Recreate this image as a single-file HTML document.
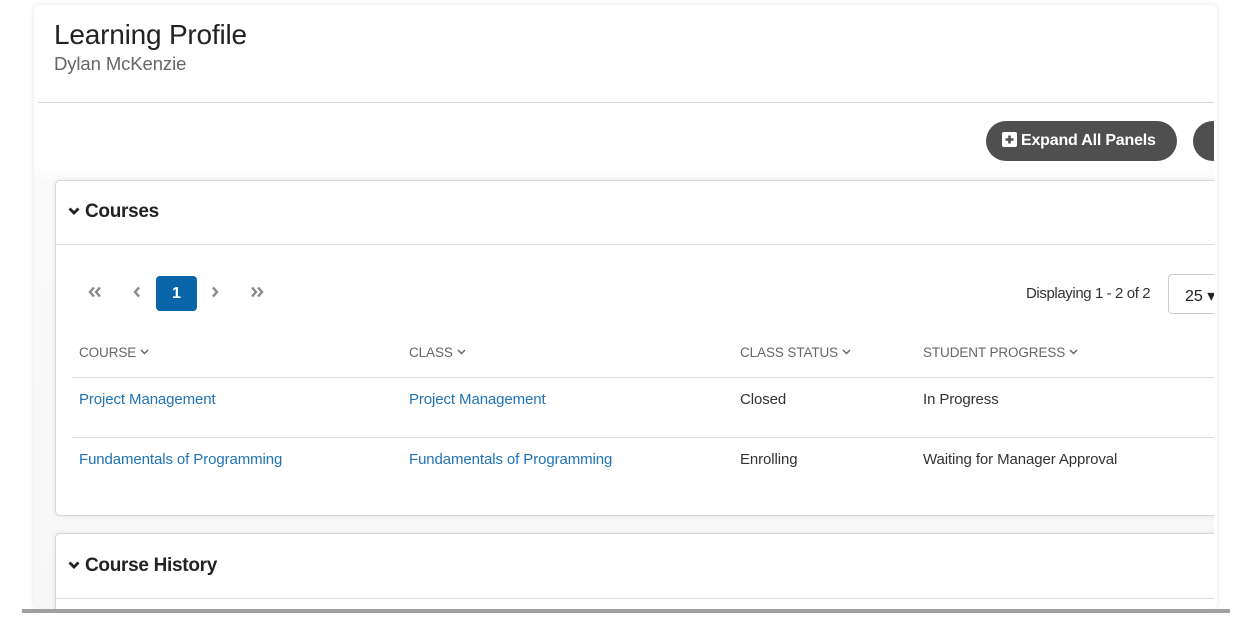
<!DOCTYPE html>
<html><head><meta charset="utf-8"><style>
*{margin:0;padding:0;box-sizing:border-box}
body{width:1251px;height:621px;overflow:hidden;background:#fff;font-family:"Liberation Sans",Arial,sans-serif;position:relative}
.abs{position:absolute}
.card{left:34px;top:5px;width:1183px;height:604px;background:#fff;border-radius:6px;box-shadow:0 0 6px rgba(0,0,0,.12)}
.clip{left:34px;top:0;width:1180px;height:609px;overflow:hidden}
.panel{background:#fff;border:1px solid #d6d6d6;border-radius:5px;box-shadow:0 0 6px rgba(0,0,0,.08)}
.th{font-size:13.5px;color:#666;top:345px;letter-spacing:-.1px}
.td{font-size:15px;color:#333;letter-spacing:-.1px}
.lk{color:#1f73b7}
.sv{display:inline-block;vertical-align:middle;margin-left:4px;position:relative;top:-1px}
.pg{top:286px}
</style></head><body>
<div class="abs card"></div>
<div class="abs clip">
  <div class="abs" style="left:20px;top:19px;font-size:28px;color:#222;letter-spacing:-.2px">Learning Profile</div>
  <div class="abs" style="left:20px;top:53px;font-size:18.5px;color:#666;letter-spacing:-.1px">Dylan McKenzie</div>
  <div class="abs" style="left:4px;top:102px;width:1180px;height:1px;background:#d4d4d4"></div>
  <div class="abs" style="left:0;top:103px;width:1180px;height:518px;background:linear-gradient(#fff,#fff 60px,#fafafa 80px,#f7f7f7)"></div>
  <div class="abs" style="left:952px;top:121px;width:191px;height:40px;border-radius:20px;background:#4f4f4f;color:#fff;font-weight:bold;font-size:16px;line-height:40px;padding-left:16px;letter-spacing:-.2px">
    <span style="display:inline-block;width:15px;height:15px;background:#fff;border-radius:2px;vertical-align:-2px;margin-right:4px;position:relative"><svg width="15" height="15" style="position:absolute;left:0;top:0"><path d="M7.5 3.5v8M3.5 7.5h8" stroke="#4f4f4f" stroke-width="2.6"/></svg></span>Expand All Panels</div>
  <div class="abs" style="left:1159px;top:121px;width:60px;height:40px;border-radius:20px;background:#4f4f4f"></div>
  <div class="abs panel" style="left:21px;top:180px;width:1180px;height:336px">
    <div class="abs" style="left:0;top:63px;width:1180px;height:1px;background:#ddd"></div>
  </div>
  <div class="abs" style="left:34px;top:201px;font-size:19px;font-weight:bold;color:#222;letter-spacing:-.3px"><svg width="12" height="10" style="margin-right:5px;vertical-align:1px"><path d="M1.5 2.5l4.5 4.5 4.5-4.5" stroke="#222" stroke-width="2.8" fill="none"/></svg>Courses</div>
  <svg class="abs pg" style="left:54px" width="14" height="12"><path d="M6 1.5L2 6l4 4.5M12 1.5L8 6l4 4.5" stroke="#888" stroke-width="2.4" fill="none"/></svg>
  <svg class="abs pg" style="left:99px" width="8" height="12"><path d="M6 1.5L2 6l4 4.5" stroke="#888" stroke-width="2.4" fill="none"/></svg>
  <div class="abs" style="left:122px;top:276px;width:41px;height:35px;background:#0a64a8;border-radius:4px;color:#fff;font-weight:bold;font-size:16px;text-align:center;line-height:35px">1</div>
  <svg class="abs pg" style="left:177px" width="8" height="12"><path d="M2 1.5L6 6l-4 4.5" stroke="#888" stroke-width="2.4" fill="none"/></svg>
  <svg class="abs pg" style="left:216px" width="14" height="12"><path d="M2 1.5L6 6l-4 4.5M8 1.5L12 6l-4 4.5" stroke="#888" stroke-width="2.4" fill="none"/></svg>
  <div class="abs td" style="left:992px;top:285px;letter-spacing:-.4px">Displaying 1 - 2 of 2</div>
  <div class="abs" style="left:1134px;top:274px;width:60px;height:40px;border:1px solid #ccc;border-radius:4px;font-size:16px;color:#222;padding:11px 0 0 16px">25 ▾</div>
  <div class="abs th" style="left:45px">COURSE<svg class="sv" width="9" height="6"><path d="M1 1l3.5 3.5L8 1" stroke="#666" stroke-width="1.5" fill="none"/></svg></div>
  <div class="abs th" style="left:375px">CLASS<svg class="sv" width="9" height="6"><path d="M1 1l3.5 3.5L8 1" stroke="#666" stroke-width="1.5" fill="none"/></svg></div>
  <div class="abs th" style="left:706px">CLASS STATUS<svg class="sv" width="9" height="6"><path d="M1 1l3.5 3.5L8 1" stroke="#666" stroke-width="1.5" fill="none"/></svg></div>
  <div class="abs th" style="left:889px">STUDENT PROGRESS<svg class="sv" width="9" height="6"><path d="M1 1l3.5 3.5L8 1" stroke="#666" stroke-width="1.5" fill="none"/></svg></div>
  <div class="abs" style="left:38px;top:377px;width:1150px;height:1px;background:#ddd"></div>
  <div class="abs" style="left:38px;top:437px;width:1150px;height:1px;background:#ddd"></div>
  <div class="abs td lk" style="left:45px;top:391px">Project Management</div>
  <div class="abs td lk" style="left:375px;top:391px">Project Management</div>
  <div class="abs td" style="left:706px;top:391px">Closed</div>
  <div class="abs td" style="left:889px;top:391px">In Progress</div>
  <div class="abs td lk" style="left:45px;top:451px">Fundamentals of Programming</div>
  <div class="abs td lk" style="left:375px;top:451px">Fundamentals of Programming</div>
  <div class="abs td" style="left:706px;top:451px">Enrolling</div>
  <div class="abs td" style="left:889px;top:451px">Waiting for Manager Approval</div>
  <div class="abs panel" style="left:21px;top:533px;width:1180px;height:120px">
    <div class="abs" style="left:0;top:64px;width:1180px;height:1px;background:#ddd"></div>
  </div>
  <div class="abs" style="left:34px;top:555px;font-size:19px;font-weight:bold;color:#222;letter-spacing:-.3px"><svg width="12" height="10" style="margin-right:5px;vertical-align:1px"><path d="M1.5 2.5l4.5 4.5 4.5-4.5" stroke="#222" stroke-width="2.8" fill="none"/></svg>Course History</div>
</div>
<div class="abs" style="left:22px;top:609px;width:1208px;height:4px;background:#a0a0a0"></div>
</body></html>
